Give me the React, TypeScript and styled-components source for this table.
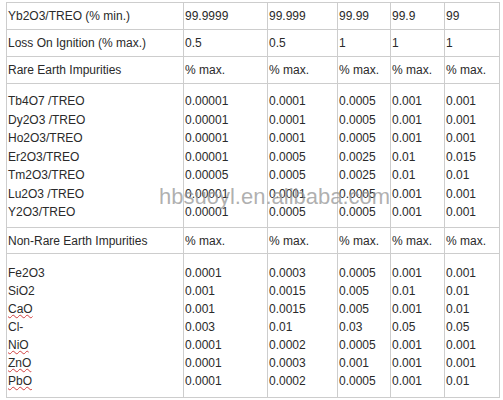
import React from 'react';
import styled, {createGlobalStyle} from 'styled-components';

const GlobalStyle = createGlobalStyle`
    html, body {
        margin: 0;
        padding: 0;
        background: #ffffff;
    }
    body {
        font-family: "Liberation Sans", Arial, sans-serif;
        font-size: 12px;
        color: #2a2a2a;
    }
`;

const Page = styled.div`
    position: relative;
    width: 503px;
    height: 400px;
    padding: 2px 0 0 6px;
    box-sizing: border-box;
`;

const Table = styled.table`
    width: 493px;
    border-collapse: collapse;
    table-layout: fixed;
`;

const Cell = styled.td<{ $h: number }>`
    height: ${({$h}) => $h}px;
    padding: 0 1px;
    border: 1px solid #cdcdcd;
    vertical-align: middle;
    white-space: nowrap;
    line-height: 14px;
    box-sizing: border-box;
`;

const GroupCell = styled.td<{ $h: number; $lh: number; $top: number }>`
    height: ${({$h}) => $h}px;
    padding: ${({$top}) => $top}px 1px 0 1px;
    border: 1px solid #cdcdcd;
    vertical-align: top;
    white-space: nowrap;
    line-height: ${({$lh}) => $lh}px;
    box-sizing: border-box;
`;

const Line = styled.div<{ $spell?: boolean }>`
    text-decoration: ${({$spell}) => $spell ? 'underline wavy #d04040' : 'none'};
    text-decoration-thickness: 1px;
    text-underline-offset: 1px;
`;

const Watermark = styled.div`
    position: absolute;
    left: 159px;
    top: 184px;
    font-size: 22px;
    color: rgba(150, 150, 150, 0.75);
    pointer-events: none;
`;

const widths = [177, 84, 70, 53, 54, 55];

const headRows = [
    ['Yb2O3/TREO (% min.)', '99.9999', '99.999', '99.99', '99.9', '99'],
    ['Loss On Ignition (% max.)', '0.5', '0.5', '1', '1', '1'],
    ['Rare Earth Impurities', '% max.', '% max.', '% max.', '% max.', '% max.'],
];

const rareEarth = [
    ['Tb4O7 /TREO', '0.00001', '0.0001', '0.0005', '0.001', '0.001'],
    ['Dy2O3 /TREO', '0.00001', '0.0001', '0.0005', '0.001', '0.001'],
    ['Ho2O3/TREO', '0.00001', '0.0001', '0.0005', '0.001', '0.001'],
    ['Er2O3/TREO', '0.00001', '0.0005', '0.0025', '0.01', '0.015'],
    ['Tm2O3/TREO', '0.00005', '0.0005', '0.0025', '0.01', '0.01'],
    ['Lu2O3 /TREO', '0.00001', '0.0001', '0.0005', '0.001', '0.001'],
    ['Y2O3/TREO', '0.00001', '0.0005', '0.0005', '0.001', '0.001'],
];

const nonRare = [
    ['Fe2O3', '0.0001', '0.0003', '0.0005', '0.001', '0.001'],
    ['SiO2', '0.001', '0.0015', '0.005', '0.01', '0.01'],
    ['CaO', '0.001', '0.0015', '0.005', '0.001', '0.01'],
    ['Cl-', '0.003', '0.01', '0.03', '0.05', '0.05'],
    ['NiO', '0.0001', '0.0002', '0.0005', '0.001', '0.001'],
    ['ZnO', '0.0001', '0.0003', '0.001', '0.001', '0.001'],
    ['PbO', '0.0001', '0.0002', '0.0005', '0.001', '0.01'],
];

const spelled = ['CaO', 'NiO', 'ZnO', 'PbO'];

const Group = ({rows, h, lh, top}: { rows: string[][]; h: number; lh: number; top: number }) => (
    <tr>
        {widths.map((_, c) => (
            <GroupCell key={c} $h={h} $lh={lh} $top={top}>
                {rows.map((r, i) => (
                    <Line key={i} $spell={c === 0 && spelled.includes(r[0])}>{r[c]}</Line>
                ))}
            </GroupCell>
        ))}
    </tr>
);

const App: React.FC = () => {
    return (
        <Page>
            <GlobalStyle/>
            <Table>
                <colgroup>
                    {widths.map((w, i) => <col key={i} style={{width: w}}/>)}
                </colgroup>
                <tbody>
                {headRows.map((r, i) => (
                    <tr key={i}>
                        {r.map((v, c) => <Cell key={c} $h={27}>{v}</Cell>)}
                    </tr>
                ))}
                <Group rows={rareEarth} h={144} lh={18.5} top={8}/>
                <tr>
                    {['Non-Rare Earth Impurities', '% max.', '% max.', '% max.', '% max.', '% max.'].map((v, c) => (
                        <Cell key={c} $h={26}>{v}</Cell>
                    ))}
                </tr>
                <Group rows={nonRare} h={144} lh={18} top={10}/>
                </tbody>
            </Table>
            <Watermark>hbsuoyl.en.alibaba.com</Watermark>
        </Page>
    );
};

export default App;
